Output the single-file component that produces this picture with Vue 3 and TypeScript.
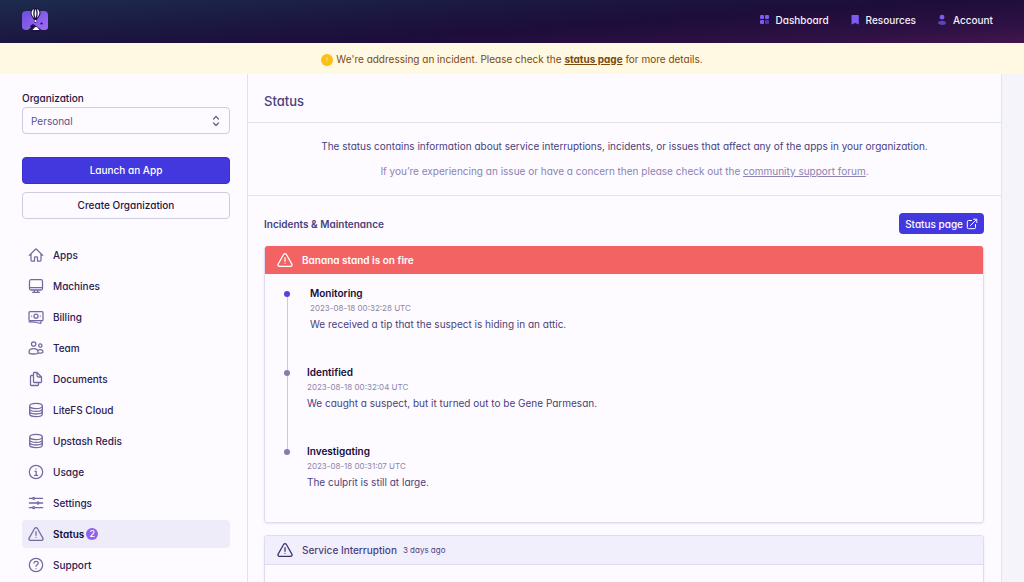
<script setup lang="ts">
interface NavItem { label: string; icon: string; badge?: number }
interface Update { state: string; time: string; text: string; current?: boolean }

const icons: Record<string, string> = {
  home: 'M2 12.500L11.200 3.300a1.126 1.126 0 011.600 0L22 12.500M4.500 10.500v9.400c0 .621.504 1.125 1.125 1.125H9.750v-5c0-.621.504-1.125 1.125-1.125h2.250c.621 0 1.125.504 1.125 1.125v5h4.125c.621 0 1.125-.504 1.125-1.125V10.500',
  machine: 'M4.500 2.500h15a2.250 2.250 0 012.250 2.250v11A2.250 2.250 0 0119.500 18h-15a2.250 2.250 0 01-2.250-2.250v-11A2.250 2.250 0 014.500 2.500zM2.250 14.500h19.500M9.500 18v3.500M14.500 18v3.500M7 21.700h10',
  billing: 'M1.500 19.200c6 0 12 .6 16.500 2.200.8.200 1.500-.300 1.500-1.100V18M3 4h18a1.500 1.500 0 011.500 1.500v10.500a1.500 1.500 0 01-1.500 1.500H3A1.500 1.500 0 011.500 16V5.500A1.500 1.500 0 013 4zM15 10.750a3 3 0 11-6 0 3 3 0 016 0zM5.500 10.750h.01M18.500 10.750h.01',
  team: 'M11.800 6a3.300 3.300 0 11-6.600 0 3.300 3.300 0 016.600 0zM21 8.300a2.500 2.500 0 11-5 0 2.500 2.500 0 015 0zM1.500 18.700c0-3.400 2.900-5.700 6.800-5.700s6.800 2.300 6.800 5.700c0 1.400-3 2.300-6.800 2.300s-6.800-.9-6.800-2.300zM15 15.300c3.800-2 7.500-.3 7.500 2.700 0 1.200-2.500 2-6.500 1.800',
  documents: 'M15.750 17.250v3.375c0 .621-.504 1.125-1.125 1.125h-9.750A1.125 1.125 0 013.750 20.625V7.875c0-.621.504-1.125 1.125-1.125H7.500M13.500 2.250H9.375c-.621 0-1.125.504-1.125 1.125v12.750c0 .621.504 1.125 1.125 1.125h9.750c.621 0 1.125-.504 1.125-1.125V9M13.500 2.250L20.250 9M13.500 2.250v4.500A2.250 2.250 0 0015.750 9h4.500',
  database: 'M21.500 6c0 2.200-4.200 4-9.500 4S2.500 8.200 2.500 6 6.700 2 12 2s9.500 1.800 9.500 4zM21.500 6v12c0 2.200-4.200 4-9.500 4s-9.500-1.800-9.500-4V6M2.500 10c0 2.200 4.200 4 9.500 4s9.500-1.800 9.500-4M2.500 14c0 2.200 4.200 4 9.500 4s9.500-1.800 9.500-4',
  info: 'M22 12a10 10 0 11-20 0 10 10 0 0120 0zM10.500 11h1.750v6M10 17h4.500M12 7.500h.01',
  sliders: 'M2 5h5M10 5h12M10 5a1.500 1.500 0 11-3 0 1.500 1.500 0 013 0zM2 12h11.500M16.500 12H22M16.500 12a1.500 1.500 0 11-3 0 1.500 1.500 0 013 0zM2 19h5M10 19h12M10 19a1.500 1.500 0 11-3 0 1.500 1.500 0 013 0z',
  warning: 'M12 8.500v5.500M12 17h.01M9.900 3.700L1.700 18.100c-.9 1.600.2 3.400 2 3.400h16.600c1.800 0 2.900-1.800 2-3.400L14.100 3.700c-.9-1.600-3.300-1.600-4.200 0z',
  question: 'M22 12a10 10 0 11-20 0 10 10 0 0120 0zM9 9c.3-3.300 6.500-3.300 6.300.3-.1 2.200-3.300 2.200-3.300 4.700M12 17.500h.01',
}

const nav: NavItem[] = [
  { label: 'Apps', icon: 'home' },
  { label: 'Machines', icon: 'machine' },
  { label: 'Billing', icon: 'billing' },
  { label: 'Team', icon: 'team' },
  { label: 'Documents', icon: 'documents' },
  { label: 'LiteFS Cloud', icon: 'database' },
  { label: 'Upstash Redis', icon: 'database' },
  { label: 'Usage', icon: 'info' },
  { label: 'Settings', icon: 'sliders' },
  { label: 'Status', icon: 'warning', badge: 2 },
  { label: 'Support', icon: 'question' },
]

const updates: Update[] = [
  { state: 'Monitoring', time: '2023-08-18 00:32:28 UTC', text: 'We received a tip that the suspect is hiding in an attic.', current: true },
  { state: 'Identified', time: '2023-08-18 00:32:04 UTC', text: 'We caught a suspect, but it turned out to be Gene Parmesan.' },
  { state: 'Investigating', time: '2023-08-18 00:31:07 UTC', text: 'The culprit is still at large.' },
]
</script>

<template>
  <div class="page">
    <header class="topbar">
      <a href="#" class="logo" aria-label="Home">
        <svg width="26" height="24" viewBox="0 0 26 24">
          <defs>
            <linearGradient id="brand" x1="0" y1="0" x2="1" y2="1">
              <stop offset="0" stop-color="#6d4de0" />
              <stop offset="1" stop-color="#a06cf5" />
            </linearGradient>
          </defs>
          <path d="M4 3h18a4 4 0 014 4v12c0 2-1 3-3 3h-3l-9-5-3 3c-1 1.500-2 2-4 2s-4-1-4-3V7a4 4 0 014-4z" fill="url(#brand)" />
          <path d="M8 18l3-2 7 5-1 3H9l1-3z" fill="#1d1240" />
          <path d="M13.500 0C10 0 8.500 2.500 8.500 5s2.500 5 4 7.500v2h2v-2c1.500-2.500 4-5 4-7.500s-1.500-5-5-5z" fill="#1d1240" />
          <path d="M12 1c-3.500 2-3 6 .2 9C11 7 11 4 12 1zM15 1c3.500 2 3 6-.2 9C16 7 16 4 15 1z" fill="#fff" />
          <path d="M13.500 1c-1.200 3-1.200 6 0 9 1.200-3 1.200-6 0-9z" fill="#fff" />
          <circle cx="13.500" cy="13" r="1" fill="#fff" />
          <circle cx="19.500" cy="15.500" r="1.100" fill="#1d1240" />
          <path d="M10.500 22c1-1 2-3 3.500-3s2.500 2 3.500 3z" fill="#fff" />
        </svg>
      </a>
      <nav class="toplinks" aria-label="Main">
        <a href="#">
          <svg width="12" height="12" viewBox="0 0 12 12"><g fill="#7c5cf0"><rect x="1" y="1" width="4" height="4" rx="1" /><rect x="6" y="1" width="4" height="4" rx="1" /><rect x="1" y="6" width="4" height="4" rx="1" /></g><rect x="6" y="6" width="4" height="4" rx="1" fill="#4d37a0" /></svg>
          Dashboard
        </a>
        <a href="#">
          <svg width="12" height="12" viewBox="0 0 12 12"><path d="M3 1h6a.8.8 0 01.8.8V10.500L6.200 9 2.500 10.500V1.800A.8.8 0 013 1z" fill="#7c5cf0" /></svg>
          Resources
        </a>
        <a href="#">
          <svg width="12" height="12" viewBox="0 0 12 12"><circle cx="6" cy="3.200" r="2.400" fill="#7c5cf0" /><path d="M2 9c0-3 8-3 8 0s-8 2-8 0z" fill="#5a43bc" /></svg>
          Account
        </a>
      </nav>
    </header>

    <div class="banner" role="status">
      <svg width="12" height="12" viewBox="0 0 12 12"><circle cx="6" cy="6" r="6" fill="#fbbf16" /><path d="M6 3.500v3M6 8v.5" stroke="#fde9a8" /></svg>
      <p>We're addressing an incident. Please check the <a href="#">status page</a> for more details.</p>
    </div>

    <div class="columns">
      <aside class="sidebar">
        <label for="org">Organization</label>
        <div class="picker">
          <select id="org"><option>Personal</option></select>
          <svg width="8" height="12" viewBox="0 0 8 12"><path d="M1.500 4L4 1.500 6.500 4M1.500 8L4 10.500 6.500 8" /></svg>
        </div>
        <button type="button" class="wide primary">Launch an App</button>
        <button type="button" class="wide plain">Create Organization</button>
        <nav class="menu" aria-label="Organization">
          <a v-for="item in nav" :key="item.label" href="#" :class="{ active: item.badge }">
            <svg class="icon" viewBox="0 0 24 24"><path :d="icons[item.icon]" /></svg>
            <span>{{ item.label }}</span>
            <span v-if="item.badge" class="badge">{{ item.badge }}</span>
          </a>
        </nav>
      </aside>

      <main class="content">
        <h1>Status</h1>
        <section class="intro">
          <p>The status contains information about service interruptions, incidents, or issues that affect any of the apps in your organization.</p>
          <p class="soft">If you’re experiencing an issue or have a concern then please check out the <a href="#">community support forum</a>.</p>
        </section>
        <section class="incidents">
          <div class="heading">
            <h2>Incidents &amp; Maintenance</h2>
            <a href="#" class="external">
              Status page
              <svg width="12" height="12" viewBox="0 0 12 12"><path d="M5.500 2.500H2.500A1.200 1.200 0 001.300 3.700V9.500A1.200 1.200 0 002.500 10.700h5.800A1.200 1.200 0 009.500 9.500V6.500M4.500 7.500l6-6M7.500 1.200h3.300v3.300" /></svg>
            </a>
          </div>

          <article class="card">
            <header class="fire">
              <svg class="icon" viewBox="0 0 24 24"><path :d="icons.warning" /></svg>
              <h3>Banana stand is on fire</h3>
            </header>
            <ol class="timeline">
              <li v-for="u in updates" :key="u.state" :class="{ current: u.current }">
                <h4>{{ u.state }}</h4>
                <time>{{ u.time }}</time>
                <p>{{ u.text }}</p>
              </li>
            </ol>
          </article>

          <article class="card">
            <header class="notice">
              <svg class="icon" viewBox="0 0 24 24"><path :d="icons.warning" /></svg>
              <h3>Service Interruption</h3>
              <small>3 days ago</small>
            </header>
            <div class="affected">Affected</div>
          </article>
        </section>
      </main>
    </div>
  </div>
</template>

<style>
body { margin: 0; background: #f5f4fb; }
</style>

<style scoped>
.page {
  height: 100vh;
  overflow: hidden;
  display: flex;
  flex-direction: column;
  font-family: Inter, "Liberation Sans", sans-serif;
  font-feature-settings: "cv11";
  font-size: 10px;
  line-height: 16px;
  color: #1f1644;
}
h1, h2, h3, h4, p, ol { margin: 0; padding: 0; font-weight: 400; font-size: 10px; }
a { color: inherit; }
button, select { font: inherit; font-feature-settings: inherit; }
.topbar {
  flex: none;
  height: 43px;
  box-sizing: border-box;
  padding: 0 31px 3px 22px;
  display: flex;
  align-items: center;
  justify-content: space-between;
  background: linear-gradient(176deg, #1d2b4e 0%, #1b1740 36%, #1d0d3a 58%, #2f1145 84%, #43164d 100%);
}
.logo { display: flex; }
.toplinks { display: flex; gap: 20px; }
.toplinks a {
  display: flex;
  align-items: center;
  gap: 5px;
  color: #f3f1fb;
  font-weight: 500;
  text-decoration: none;
}
.banner {
  flex: none;
  height: 31px;
  display: flex;
  align-items: center;
  justify-content: center;
  gap: 3px;
  background: #fff8e3;
  color: #7c4a12;
  font-weight: 500;
}
.banner svg { margin-top: 3px; }
.banner a { font-weight: 700; }
.columns { flex: 1; min-height: 0; display: flex; padding-right: 22px; }
.sidebar {
  width: 208px;
  flex: none;
  padding: 16px 17px 0 22px;
  display: flex;
  flex-direction: column;
  background: #fdfbff;
  border-right: 1px solid #e4e1f0;
}
.sidebar label { font-weight: 500; }
.picker { position: relative; margin: 1px 0 23px; }
.picker select {
  display: block;
  width: 100%;
  height: 27px;
  padding: 0 8px;
  appearance: none;
  border: 1px solid #cfcbe0;
  border-radius: 4px;
  background: #fdfbff;
  color: #5b5087;
}
.picker svg { position: absolute; right: 10px; top: 8px; }
.picker path, .external path { fill: none; stroke: #6b618f; stroke-linecap: round; stroke-linejoin: round; }
.picker path { stroke-width: 1.3; }
.external path { stroke: #fff; }
.wide { height: 27px; padding: 0 0 2px; border-radius: 4px; font-weight: 500; }
.primary { background: #4338de; border: 1px solid #3b2fd0; color: #fff; }
.plain { margin-top: 8px; background: #fdfbff; border: 1px solid #cfcbe0; color: #1f1644; }
.menu { margin-top: 22px; display: flex; flex-direction: column; gap: 3px; }
.menu a {
  height: 28px;
  flex: none;
  padding: 0 6px;
  display: flex;
  align-items: center;
  border-radius: 4px;
  color: #2a2052;
  font-weight: 500;
  text-decoration: none;
}
.icon {
  flex: none;
  width: 16px;
  height: 16px;
  margin-right: 9px;
  fill: none;
  stroke: #746aa0;
  stroke-width: 1.9;
  stroke-linecap: round;
  stroke-linejoin: round;
}
.menu .active { background: #edecf8; color: #160b3a; font-weight: 600; }
.badge {
  margin-left: 2px;
  width: 12px;
  height: 12px;
  border-radius: 6px;
  background: #9061ee;
  color: #fff;
  font-size: 9px;
  line-height: 12px;
  font-weight: 500;
  text-align: center;
}
.content { flex: 1; min-width: 0; background: #fdfbff; border-right: 1px solid #e4e1f0; }
h1 {
  padding: 19px 16px 13px;
  font-size: 13px;
  font-weight: 500;
  border-bottom: 1px solid #e6e3f1;
  color: #4a3f7c;
}
.intro {
  padding: 15px 16px 16px;
  display: flex;
  flex-direction: column;
  gap: 9px;
  text-align: center;
  color: #4a3f7c;
  border-bottom: 1px solid #e6e3f1;
}
.soft { color: #8c82b4; }
.incidents { padding: 17px 17px 0 16px; display: flex; flex-direction: column; }
.heading { display: flex; justify-content: space-between; align-items: center; margin-bottom: 12px; }
h2 { font-weight: 600; color: #4a3f7c; }
.external {
  display: flex;
  align-items: center;
  gap: 3px;
  height: 21px;
  padding: 0 6px;
  border-radius: 4px;
  background: #4338de;
  color: #fff;
  font-weight: 500;
  text-decoration: none;
}
.card {
  flex: none;
  margin-bottom: 12px;
  border: 1px solid #e0dcf0;
  border-radius: 3px;
  box-shadow: 0 1px 2px #e8e5f3;
}
.card header { display: flex; align-items: center; height: 28px; padding: 0 12px; border-radius: 3px 3px 0 0; }
.card .fire { margin: -1px 0 0; background: #f46363; color: #fff; }
.fire h3 { font-weight: 600; }
.card .fire .icon { stroke: #fff; }
.notice { background: #f2effd; border-bottom: 1px solid #dedaf2; color: #4a3f7c; }
.card .notice .icon { stroke: #3d3270; }
.notice h3 { font-weight: 500; }
.notice small { font-size: 8px; margin-left: 6px; }
.timeline { list-style: none; padding: 11px 19px 0; }
.timeline li { position: relative; height: 79px; padding-left: 23px; }
.timeline li::before {
  content: "";
  position: absolute;
  left: 0;
  top: 6px;
  width: 6px;
  height: 6px;
  border-radius: 3px;
  background: #877cab;
}
.timeline li:not(:last-child)::after {
  content: "";
  position: absolute;
  left: 3px;
  top: 12px;
  width: 1px;
  height: 73px;
  background: #cdc8de;
}
.timeline .current { padding-left: 26px; }
.timeline .current::before { background: #5b3fdc; }
h4 { font-weight: 600; color: #160b3a; }
time { display: block; font-size: 8px; line-height: 14px; color: #8d85a8; }
.timeline p { line-height: 18px; color: #4a3f7c; }
.affected { padding: 13px 16px; font-weight: 600; color: #4a3f7c; }
</style>
